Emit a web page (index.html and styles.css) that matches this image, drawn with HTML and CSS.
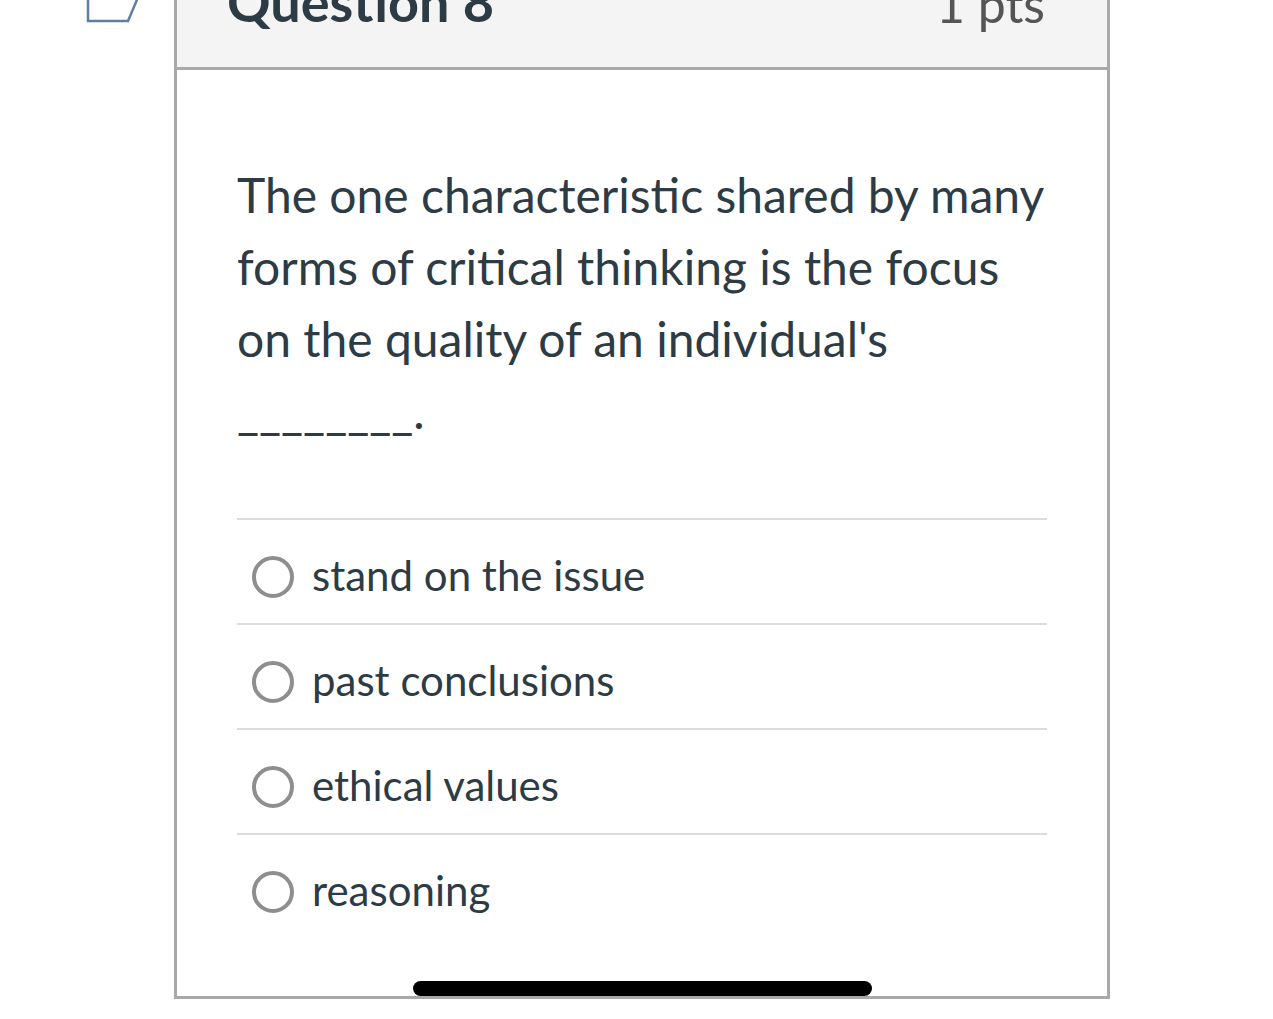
FILE: index.html
```html
<!DOCTYPE html>
<html>
<head>
<meta charset="utf-8">
<link rel="stylesheet" href="styles.css">
</head>
<body>
<div class="page">
  <div class="side">
    <svg class="flag" width="70" height="30" viewBox="0 0 70 30">
      <path d="M2 -10 V21 H42 L56 -12" fill="none" stroke="#5f7f9c" stroke-width="2.5"/>
    </svg>
  </div>
  <div class="card">
    <div class="header">
      <span class="title">Question 8</span>
      <span class="pts">1 pts</span>
    </div>
    <div class="body">
      <p class="question">The one characteristic shared by many forms of critical thinking is the focus on the quality of an individual's ________.</p>
      <div class="answers">
        <label class="answer"><span class="radio"></span><span class="atext">stand on the issue</span></label>
        <label class="answer"><span class="radio"></span><span class="atext">past conclusions</span></label>
        <label class="answer"><span class="radio"></span><span class="atext">ethical values</span></label>
        <label class="answer"><span class="radio"></span><span class="atext">reasoning</span></label>
      </div>
    </div>
    <div class="home-bar"></div>
  </div>
</div>
</body>
</html>
```

FILE: styles.css
```css
html, body {
  margin: 0;
  padding: 0;
  background: #ffffff;
}
body {
  font-family: Lato, "Open Sans", sans-serif;
  color: #2d3b45;
  overflow: hidden;
}
.page {
  display: flex;
  align-items: flex-start;
  padding-left: 86px;
  margin-top: -57px;
}
.side {
  width: 88px;
  padding-top: 57px;
}
.flag {
  display: block;
}
.card {
  position: relative;
  width: 930px;
  border: 3px solid #a9a9a9;
  border-top: none;
  box-sizing: content-box;
}
.header {
  background: #f4f4f4;
  border-bottom: 3px solid #a9a9a9;
  height: 127px;
  display: flex;
  justify-content: space-between;
  align-items: flex-end;
  padding: 0 62px 0 50px;
  box-sizing: border-box;
}
.title {
  font-size: 54px;
  font-weight: 700;
  line-height: 1;
  margin-bottom: 38px;
  color: #2d3b45;
}
.pts {
  font-size: 50px;
  font-weight: 400;
  line-height: 1;
  margin-bottom: 38px;
  color: #555;
}
.body {
  padding: 89px 60px 58px 60px;
}
.question {
  margin: 0;
  font-size: 48px;
  line-height: 72px;
}
.answers {
  margin-top: 71px;
}
.answer {
  display: flex;
  align-items: center;
  box-sizing: content-box;
  border-top: 2.5px solid #dcdcdc;
  padding-left: 15px;
  padding-top: 6px;
  height: 97px;
}
.radio {
  width: 34px;
  height: 34px;
  border: 4px solid #8e8e91;
  border-radius: 50%;
  flex: none;
  margin-right: 18px;
  margin-top: 4px;
}
.atext {
  font-size: 42px;
  line-height: 1;
}
.home-bar {
  position: absolute;
  left: 236px;
  bottom: 0;
  width: 459px;
  height: 15px;
  border-radius: 8px;
  background: #000;
}
```
